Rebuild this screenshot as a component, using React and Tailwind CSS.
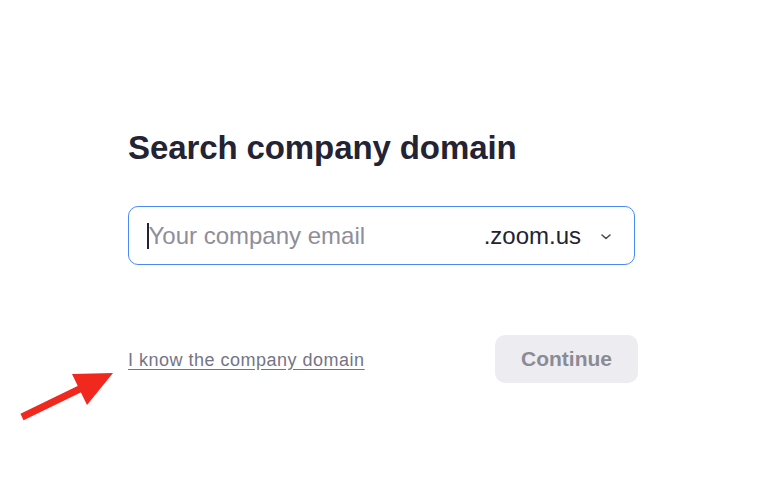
import React from 'react';

const App = () => {
  return (
    <div className="relative w-[768px] h-[477px] bg-white overflow-hidden" style={{ fontFamily: '"Liberation Sans", Arial, sans-serif' }}>
      <div className="pt-[129px] pl-[128px] w-[640px] flex flex-col">
        {/* Heading */}
        <h1 className="text-[33px] leading-[38px] font-bold text-[#232333] tracking-[-0.1px]">
          Search company domain
        </h1>

        {/* Email input */}
        <div className="mt-[39px] w-[507px] h-[59px] border-[1.5px] border-[#4a8af4] rounded-[10px] flex items-center pl-[18px] pr-[22px]">
          <span className="w-[1.5px] h-[26px] bg-[#232333]" />
          <span className="text-[24px] text-[#8e8e9b]">Your company email</span>
          <span className="ml-auto text-[24px] text-[#232333]">.zoom.us</span>
          <svg width="12" height="8" viewBox="0 0 12 8" className="ml-[19px] mt-[2px]">
            <path d="M2 2 L6 5.5 L10 2" fill="none" stroke="#4a4a55" strokeWidth="1.6" strokeLinecap="round" strokeLinejoin="round" />
          </svg>
        </div>

        {/* Bottom row */}
        <div className="mt-[70px] w-[510px] flex items-center justify-between">
          <a className="text-[18px] tracking-[0.5px] text-[#747487] underline underline-offset-[3px] mt-[2px]">
            I know the company domain
          </a>
          <button className="w-[143px] h-[48px] rounded-[10px] bg-[#ededf1] text-[21px] font-bold text-[#8b8b96]">
            Continue
          </button>
        </div>
      </div>

      {/* Red annotation arrow */}
      <svg className="absolute left-0 top-0" width="768" height="477">
        <line x1="22" y1="417" x2="92" y2="383" stroke="#f0281e" strokeWidth="7" />
        <polygon points="113,373 72,374 87,405" fill="#f0281e" />
      </svg>
    </div>
  );
};

export default App;
